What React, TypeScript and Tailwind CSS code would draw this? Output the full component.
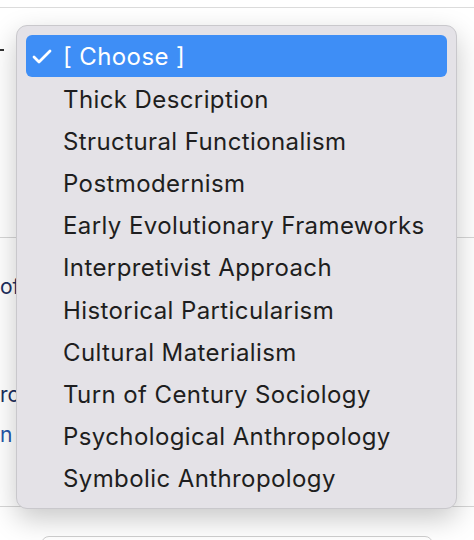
import { Check } from 'lucide-react';

const options = [
  'Thick Description',
  'Structural Functionalism',
  'Postmodernism',
  'Early Evolutionary Frameworks',
  'Interpretivist Approach',
  'Historical Particularism',
  'Cultural Materialism',
  'Turn of Century Sociology',
  'Psychological Anthropology',
  'Symbolic Anthropology',
];

export default function App() {
  return (
    <div
      className="relative w-[474px] h-[540px] overflow-hidden bg-white"
      style={{ fontFamily: 'Inter, "Liberation Sans", sans-serif' }}
    >
      {/* page behind the menu */}
      <div className="flex flex-col">
        <div className="h-[7px]" />
        <div className="border-t border-[#dcdcdc] h-[230px]">
          <div className="mt-[41px] w-[4px] h-[2px] bg-[#333]" />
        </div>
        <div className="border-t border-[#d6d6d6] h-[269px] pt-[35px] text-[21px] leading-[28px]">
          <div className="text-[#1c2f5e]">of</div>
          <div className="h-[80px]" />
          <div className="text-[#1c2f5e]">ro</div>
          <div className="h-[12px]" />
          <div className="text-[#2556a8]">n</div>
        </div>
        <div className="border-t border-[#d6d6d6] pt-[29px] px-[41px]">
          <div className="h-[20px] rounded-t-[8px] border border-[#cfcfcf] bg-white" />
        </div>
      </div>

      {/* dropdown menu */}
      <div className="absolute left-[16px] top-[25px] w-[441px] rounded-[11px] bg-[#e4e2e7] border border-[#c9c8cc] shadow-[0_10px_28px_rgba(0,0,0,0.22)] px-[9px] py-[9px]">
        <div className="flex items-center h-[42px] rounded-[6px] bg-[#3e8ef6] text-white pl-[4px] pt-[2px]">
          <Check size={24} strokeWidth={2.8} className="mr-[9px]" />
          <span className="text-[24px] tracking-[0.4px]">[ Choose ]</span>
        </div>
        {options.map((o) => (
          <div key={o} className="flex items-center h-[42.2px] pl-[37px] pt-[3px] text-[24px] text-[#1e1e20] tracking-[0.4px]">
            {o}
          </div>
        ))}
      </div>
    </div>
  );
}
